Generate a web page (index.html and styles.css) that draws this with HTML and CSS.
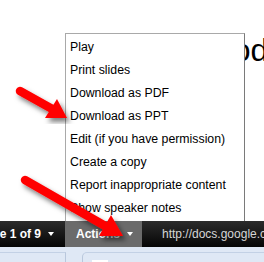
FILE: index.html
```html
<!DOCTYPE html>
<html lang="en">

<head>
    <meta charset="UTF-8" />
    <meta name="viewport" content="width=device-width, initial-scale=1.0" />
    <title>Actions menu</title>
    <link rel="stylesheet" href="styles.css">
</head>

<body>
    <div class="page">
        <div class="doc">
            <div class="doc-title">Good</div>
        </div>

        <div class="toolbar">
            <div class="pager">Slide 1 of 9 <span class="caret"></span></div>
            <div class="actions">Actions <span class="caret"></span></div>
            <div class="url">http://docs.google.com/present/view</div>
        </div>

        <div class="panes">
            <div class="pane-left"></div>
            <div class="pane-right"><span class="thumb"></span></div>
        </div>

        <ul class="menu">
            <li>Play</li>
            <li>Print slides</li>
            <li>Download as PDF</li>
            <li>Download as PPT</li>
            <li>Edit (if you have permission)</li>
            <li>Create a copy</li>
            <li>Report inappropriate content</li>
            <li>Show speaker notes</li>
        </ul>

        <!-- annotation arrows -->
        <svg class="arrows" width="264" height="262" viewBox="0 0 264 262">
            <defs>
                <filter id="shadow" x="-20%" y="-20%" width="140%" height="140%">
                    <feDropShadow dx="3" dy="4" stdDeviation="2.5" flood-color="#000" flood-opacity="0.5" />
                </filter>
            </defs>
            <g filter="url(#shadow)" fill="#f00">
                <line x1="20" y1="91" x2="54" y2="110" stroke="#f00" stroke-width="8.5" stroke-linecap="round" />
                <polygon points="67,118 57,99 45,118" />
            </g>
            <g filter="url(#shadow)" fill="#f00">
                <line x1="25" y1="180" x2="107" y2="227" stroke="#f00" stroke-width="8.5" stroke-linecap="round" />
                <polygon points="123,236 111,215 99,236" />
            </g>
        </svg>
    </div>
</body>

</html>
```

FILE: styles.css
```css
body {
    margin: 0;
    background-color: #fff;
    font-family: "Liberation Sans", Arial, sans-serif;
}

.page {
    position: relative;
    width: 264px;
    height: 262px;
    overflow: hidden;
}

.doc {
    height: 221px;
}

.doc-title {
    padding: 34px 0 0 190px;
    font-size: 32px;
    line-height: 32px;
    color: #000;
    white-space: nowrap;
}

.toolbar {
    display: flex;
    align-items: stretch;
    height: 26px;
    background: linear-gradient(#2c2c2c, #050505);
    color: #fff;
    font-size: 12px;
    font-weight: bold;
    white-space: nowrap;
}

.pager {
    width: 65px;
    flex-shrink: 0;
    display: flex;
    align-items: center;
    justify-content: flex-end;
    padding-right: 11px;
    box-sizing: border-box;
    overflow: hidden;
}

.actions {
    width: 77px;
    flex-shrink: 0;
    display: flex;
    align-items: center;
    padding-left: 11px;
    box-sizing: border-box;
    background-color: #6b6b6b;
}

.caret {
    display: inline-block;
    width: 0;
    height: 0;
    margin-left: 7px;
    border-left: 3.5px solid transparent;
    border-right: 3.5px solid transparent;
    border-top: 4px solid #fff;
}

.url {
    display: flex;
    align-items: center;
    margin-left: 20px;
    font-weight: normal;
    color: #d6d6d6;
}

.panes {
    display: flex;
    height: 15px;
    background-color: #dfe8f5;
}

.pane-left {
    width: 65px;
    margin-top: 5px;
    border-top: 1px solid #c3d1e5;
    border-right: 1px solid #b9c7dc;
}

.pane-right {
    flex: 1;
    margin: 5px 0 0 16px;
    border-top: 1px solid #c3d1e5;
    border-left: 1px solid #b9c7dc;
    border-top-left-radius: 5px;
    padding-left: 9px;
    padding-top: 7px;
}

.thumb {
    display: block;
    width: 16px;
    height: 4px;
    background-color: #fff;
}

.menu {
    position: absolute;
    left: 65px;
    top: 33px;
    width: 180px;
    margin: 0;
    padding: 2px 0 0 4px;
    list-style: none;
    background-color: #fff;
    border: 1px solid #a9a9a9;
    border-right-color: #7a7a7a;
    border-bottom: none;
    height: 188px;
    box-sizing: border-box;
    font-size: 12.3px;
    color: #000;
}

.menu li {
    height: 23px;
    line-height: 23px;
    white-space: nowrap;
}

.arrows {
    position: absolute;
    left: 0;
    top: 0;
    pointer-events: none;
}
```
